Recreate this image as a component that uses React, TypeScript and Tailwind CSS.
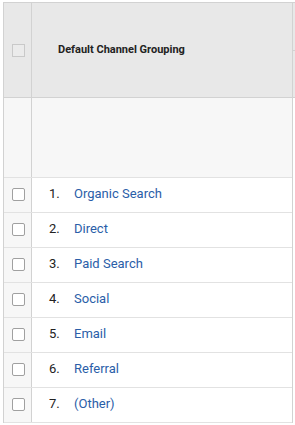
import React from 'react';

const rows = ['Organic Search', 'Direct', 'Paid Search', 'Social', 'Email', 'Referral', '(Other)'];

const App: React.FC = () => {
  return (
    <div className="w-[295px] h-[425px] bg-white overflow-hidden pt-[2px] pl-[3px]" style={{ fontFamily: 'Roboto, "Liberation Sans", sans-serif' }}>
      <div className="flex">
        <div className="w-[290px] border-t border-l border-r border-[#d2d2d2]">
          {/* Header */}
          <div className="flex h-[95px] bg-[#e8e8e8] border-b border-[#d2d2d2]">
            <div className="w-[28px] shrink-0 border-r border-[#d2d2d2] flex items-center justify-center pl-[2px]">
              <div className="w-[13px] h-[13px] border border-[#c9c9c9] bg-[#ebebeb]" />
            </div>
            <div className="flex-1 flex items-center pl-[26px] text-[11px] font-bold text-[#222]">
              Default Channel Grouping
            </div>
          </div>

          {/* Sub header blank */}
          <div className="flex h-[80px] bg-[#f7f7f7] border-b border-[#e2e2e2]">
            <div className="w-[28px] shrink-0 border-r border-[#d2d2d2]" />
            <div className="flex-1" />
          </div>

          {/* Rows */}
          {rows.map((label, i) => (
            <div key={label} className="flex h-[35px] border-b border-[#e2e2e2]">
              <div className="w-[28px] shrink-0 bg-[#f7f7f7] border-r border-[#d2d2d2] flex items-center justify-center pl-[2px] pb-[2px]">
                <div className="w-[13px] h-[13px] rounded-[2px] border border-[#a0a0a0] bg-white" />
              </div>
              <div className="flex-1 flex items-center text-[13px] pb-[2px]">
                <span className="w-[42px] pl-[17px] text-[#222]">{i + 1}.</span>
                <span className="text-[#2a5ea8]">{label}</span>
              </div>
            </div>
          ))}
        </div>
        {/* next column sliver */}
        <div className="w-[2px] flex flex-col">
          <div className="h-[48px] bg-[#e8e8e8] border-t border-[#d2d2d2]" />
          <div className="h-[48px] bg-[#e8e8e8] border-t border-[#d2d2d2] border-b" />
        </div>
      </div>
    </div>
  );
};

export default App;
